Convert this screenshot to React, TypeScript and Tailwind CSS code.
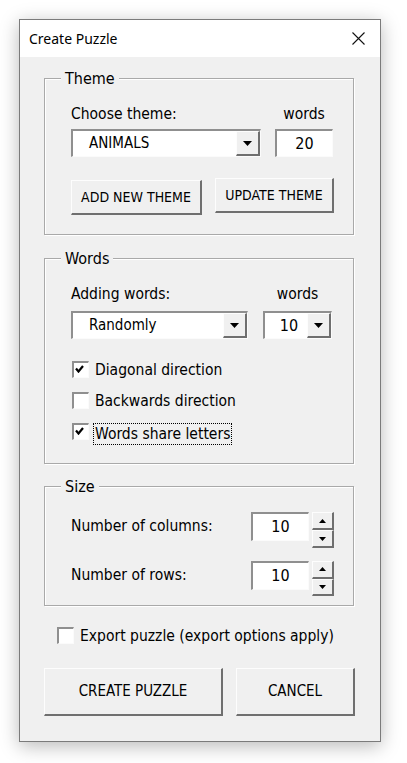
import type { ReactNode } from 'react'

// classic win32 3D edges
const sunken =
  'border-t-2 border-l-2 border-r border-b border-t-[#8f8f8f] border-l-[#8f8f8f] border-r-[#fbfbfb] border-b-[#fbfbfb]'
const raised =
  'border-t border-l border-r-2 border-b-2 border-t-[#fdfdfd] border-l-[#fdfdfd] border-r-[#6f6f6f] border-b-[#6f6f6f]'
const tahoma = "font-['DejaVu_Sans_Condensed','DejaVu_Sans',sans-serif] [font-stretch:condensed]"

function ArrowDown({ w = 9, h = 5 }: { w?: number; h?: number }) {
  return (
    <svg width={w} height={h} viewBox={`0 0 ${w} ${h}`}>
      <polygon points={`0,0 ${w},0 ${w / 2},${h}`} fill="#000" />
    </svg>
  )
}

function ArrowUp({ w = 7, h = 4 }: { w?: number; h?: number }) {
  return (
    <svg width={w} height={h} viewBox={`0 0 ${w} ${h}`}>
      <polygon points={`0,${h} ${w},${h} ${w / 2},0`} fill="#000" />
    </svg>
  )
}

function Group({ title, className, children }: { title: string; className: string; children: ReactNode }) {
  return (
    <div
      className={`relative border border-[#a9a9a9] shadow-[inset_1px_1px_0_#ffffff,1px_1px_0_#ffffff] ${className}`}
    >
      <span className="absolute -top-[10px] left-[16px] bg-[#f0f0f0] px-[4px] text-[16px] leading-[20px] text-black">
        {title}
      </span>
      {children}
    </div>
  )
}

function Combo({ value, width, textClass }: { value: string; width: string; textClass: string }) {
  return (
    <div className={`flex h-[28px] bg-white ${sunken} ${width}`}>
      <div className={`flex flex-1 items-center ${textClass}`}>{value}</div>
      <div className={`flex w-[24px] items-center justify-center bg-[#f0f0f0] ${raised}`}>
        <ArrowDown />
      </div>
    </div>
  )
}

function CheckBox({ checked }: { checked: boolean }) {
  return (
    <div className={`flex h-[17px] w-[17px] shrink-0 items-center justify-center bg-white ${sunken}`}>
      {checked && (
        <svg width="9" height="8" viewBox="0 0 9 8" className="-ml-[3px] -mt-[2px]">
          <polyline points="1,3.5 3.5,6.5 8,1" fill="none" stroke="#000" strokeWidth="2.2" />
        </svg>
      )}
    </div>
  )
}

function Spinner({ value, height }: { value: string; height: string }) {
  return (
    <div className="flex items-start">
      <div className={`flex h-[29px] w-[58px] items-center justify-center bg-white text-[16px] ${sunken}`}>
        {value}
      </div>
      <div className={`ml-[3px] flex w-[22px] flex-col ${height}`}>
        <div className={`flex flex-1 items-center justify-center bg-[#f0f0f0] ${raised}`}>
          <ArrowUp />
        </div>
        <div className={`flex flex-1 items-center justify-center bg-[#f0f0f0] ${raised}`}>
          <ArrowDown w={7} h={4} />
        </div>
      </div>
    </div>
  )
}

export default function App() {
  return (
    <div className="min-h-[763px] bg-white pl-[19px] pt-[19px]">
      <div
        className={`flex h-[723px] w-[362px] flex-col border border-[#7b7b7b] bg-[#f0f0f0] text-black shadow-[0_4px_18px_rgba(0,0,0,0.28)] ${tahoma}`}
      >
        {/* title bar */}
        <div className="flex h-[37px] items-center justify-between bg-white pl-[9px] pr-[15px]">
          <span className="font-['Noto_Sans',sans-serif] text-[14px] [font-stretch:normal]">Create Puzzle</span>
          <svg width="13" height="13" viewBox="0 0 13 13">
            <path d="M0.5 0.5 L12.5 12.5 M12.5 0.5 L0.5 12.5" stroke="#111" strokeWidth="1.1" />
          </svg>
        </div>

        <div className="flex flex-col pl-[24px]">
          {/* Theme */}
          <Group title="Theme" className="mt-[21px] w-[310px] pb-[19px] pl-[26px] pt-[25px]">
            <div className="flex gap-[14px]">
              <div className="flex w-[190px] flex-col">
                <span className="text-[15.5px] leading-[20px]">Choose theme:</span>
                <div className="mt-[5px]">
                  <Combo value="ANIMALS" width="w-[190px]" textClass="pl-[16px] text-[15px]" />
                </div>
              </div>
              <div className="flex w-[58px] flex-col items-center">
                <span className="text-[15.5px] leading-[20px]">words</span>
                <div
                  className={`mt-[5px] flex h-[28px] w-[58px] items-center justify-center bg-white text-[16px] ${sunken}`}
                >
                  20
                </div>
              </div>
            </div>
            <div className="mt-[21px] flex items-start">
              <button
                className={`mt-[2px] h-[35px] w-[131px] bg-[#f0f0f0] text-[14px] ${raised}`}
              >
                ADD NEW THEME
              </button>
              <button className={`ml-[13px] h-[35px] w-[119px] bg-[#f0f0f0] text-[14px] ${raised}`}>
                UPDATE THEME
              </button>
            </div>
          </Group>

          {/* Words */}
          <Group title="Words" className="mt-[23px] w-[310px] pb-[23px] pl-[26px] pt-[25px]">
            <div className="flex gap-[15px]">
              <div className="flex w-[177px] flex-col">
                <span className="text-[15.5px] leading-[20px]">Adding words:</span>
                <div className="mt-[7px]">
                  <Combo value="Randomly" width="w-[177px]" textClass="pl-[16px] text-[15px]" />
                </div>
              </div>
              <div className="flex w-[69px] flex-col items-center">
                <span className="text-[15.5px] leading-[20px]">words</span>
                <div className="mt-[7px]">
                  <Combo value="10" width="w-[69px]" textClass="justify-center pl-[6px] text-[16px]" />
                </div>
              </div>
            </div>
            <div className="ml-[1px] mt-[22px] flex flex-col gap-[14px]">
              <div className="flex h-[17px] items-center">
                <CheckBox checked />
                <span className="ml-[6px] text-[15.5px] leading-[20px]">Diagonal direction</span>
              </div>
              <div className="flex h-[17px] items-center">
                <CheckBox checked={false} />
                <span className="ml-[6px] text-[15.5px] leading-[20px]">Backwards direction</span>
              </div>
              <div className="flex h-[17px] items-center">
                <CheckBox checked />
                <span className="ml-[4px] mt-[4px] border border-dotted border-black px-[1px] text-[15.5px] leading-[20px]">
                  Words share letters
                </span>
              </div>
            </div>
          </Group>

          {/* Size */}
          <Group title="Size" className="mt-[22px] w-[310px] pb-[9px] pl-[26px] pt-[25px]">
            <div className="flex items-start">
              <span className="mt-[4px] w-[180px] text-[15.5px] leading-[20px]">Number of columns:</span>
              <Spinner value="10" height="h-[36px]" />
            </div>
            <div className="mt-[13px] flex items-start">
              <span className="mt-[4px] w-[180px] text-[15.5px] leading-[20px]">Number of rows:</span>
              <Spinner value="10" height="h-[35px]" />
            </div>
          </Group>

          {/* export */}
          <div className="ml-[13px] mt-[21px] flex h-[17px] items-center">
            <CheckBox checked={false} />
            <span className="ml-[6px] text-[15.5px] leading-[20px]">Export puzzle (export options apply)</span>
          </div>

          <div className="mt-[24px] flex">
            <button className={`h-[48px] w-[179px] bg-[#f0f0f0] text-[15px] ${raised}`}>CREATE PUZZLE</button>
            <button className={`ml-[13px] h-[48px] w-[119px] bg-[#f0f0f0] text-[15px] ${raised}`}>CANCEL</button>
          </div>
        </div>
      </div>
    </div>
  )
}
